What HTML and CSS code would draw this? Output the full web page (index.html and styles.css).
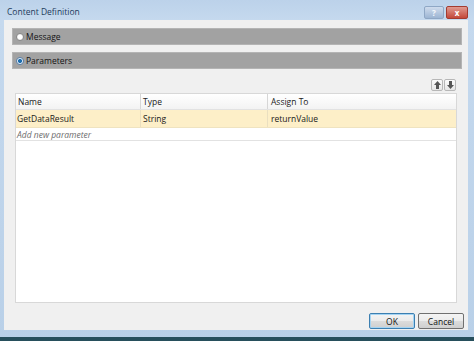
FILE: index.html
```html
<!DOCTYPE html>
<html>
<head>
<meta charset="utf-8">
<link rel="stylesheet" href="styles.css">
</head>
<body>
<div class="window">
  <div class="titlebar">
    <span class="title">Content Definition</span>
    <div class="caption-btns">
      <span class="cbtn help">?</span>
      <span class="cbtn close">x</span>
    </div>
  </div>
  <div class="client">
    <div class="bar"><span class="radio"></span><span>Message</span></div>
    <div class="bar"><span class="radio checked"></span><span>Parameters</span></div>
    <div class="movers">
      <span class="mover"><svg width="7" height="8" viewBox="0 0 7 8"><path d="M3.5 0 L7 4 L5 4 L5 8 L2 8 L2 4 L0 4 Z" fill="#555"/></svg></span>
      <span class="mover"><svg width="7" height="8" viewBox="0 0 7 8"><path d="M3.5 8 L7 4 L5 4 L5 0 L2 0 L2 4 L0 4 Z" fill="#555"/></svg></span>
    </div>
    <div class="grid">
      <div class="row head">
        <div class="cell c1">Name</div>
        <div class="cell c2">Type</div>
        <div class="cell c3">Assign To</div>
      </div>
      <div class="row data">
        <div class="cell c1">GetDataResult</div>
        <div class="cell c2">String</div>
        <div class="cell c3">returnValue</div>
      </div>
      <div class="row addnew">
        <div class="cell">Add new parameter</div>
      </div>
    </div>
    <div class="actions">
      <span class="btn default">OK</span>
      <span class="btn">Cancel</span>
    </div>
  </div>
  <div class="taskbar"></div>
</div>
</body>
</html>
```
FILE: styles.css
```css
html, body {
  margin: 0;
  padding: 0;
}
body {
  width: 474px;
  height: 341px;
  overflow: hidden;
  font-family: "Open Sans", "Noto Sans", "Liberation Sans", sans-serif;
  font-size: 8.5px;
  color: #1a1a1a;
}
.window {
  width: 474px;
  height: 341px;
  display: flex;
  flex-direction: column;
  background: linear-gradient(to bottom, #bcd2ea 0px, #c5d9ee 20px, #b9d0e8 100%);
}
.titlebar {
  height: 20px;
  display: flex;
  align-items: center;
  justify-content: space-between;
  padding: 0 6px 0 7px;
  flex: none;
}
.title {
  color: #1e3b5c;
  font-size: 8.5px;
  padding-top: 2px;
}
.caption-btns {
  display: flex;
  gap: 2px;
  align-self: flex-start;
  margin-top: 6px;
}
.cbtn {
  height: 11px;
  display: flex;
  align-items: center;
  justify-content: center;
  color: #fff;
  font-size: 8px;
  font-weight: bold;
  border-radius: 2px;
  line-height: 1;
}
.help {
  width: 18px;
  background: linear-gradient(to bottom, #cfdced, #9db5d3);
  border: 1px solid #8fa7c5;
  color: #f5f8fc;
}
.close {
  width: 20px;
  background: linear-gradient(to bottom, #e09a90, #c4483a);
  border: 1px solid #a33b30;
}
.client {
  flex: none;
  height: 310px;
  margin: 0 6px 0 4px;
  background: #f0f0f0;
  display: flex;
  flex-direction: column;
  padding-top: 8px;
  box-sizing: border-box;
}
.bar {
  height: 17px;
  margin: 0 6px 7px 8px;
  background: #a2a2a2;
  border: 1px solid #b4b4b4;
  box-sizing: border-box;
  display: flex;
  align-items: center;
  gap: 2px;
  padding-left: 3px;
  color: #141414;
}
.radio {
  width: 6px;
  height: 6px;
  border-radius: 50%;
  background: radial-gradient(circle, #ffffff 40%, #e4e4e4 100%);
  border: 1px solid #8a8a8a;
}
.radio.checked {
  background: radial-gradient(circle, #1e6fb0 0 1.8px, #e8f0f8 2.3px);
  border-color: #5a7fa6;
}
.movers {
  display: flex;
  justify-content: flex-end;
  gap: 1px;
  margin: 3px 12px 2px 0;
}
.mover {
  width: 10px;
  height: 10px;
  border: 1px solid #b7b7b7;
  border-radius: 2px;
  background: linear-gradient(to bottom, #fbfbfb, #e6e6e6);
  display: flex;
  align-items: center;
  justify-content: center;
}
.grid {
  height: 210px;
  margin: 0 11px;
  background: #fff;
  border: 1px solid #d8d8d8;
  box-sizing: border-box;
  display: flex;
  flex-direction: column;
}
.row {
  display: flex;
  flex: none;
}
.cell {
  padding-left: 1px;
  box-sizing: border-box;
  display: flex;
  align-items: center;
  white-space: nowrap;
}
.c1 { width: 125px; padding-left: 2px; }
.c2 { width: 127px; padding-left: 2px; }
.c3 { flex: 1; padding-left: 3px; }
.head {
  height: 15px;
  background: linear-gradient(to bottom, #ffffff, #f3f3f3);
  border-bottom: 1px solid #e2e2e2;
}
.head .cell {
  border-right: 1px solid #d6d6d6;
}
.head .c3 { border-right: none; }
.data {
  height: 17px;
  background: #fdefc8;
  border-bottom: 1px solid #efe3c0;
}
.data .c1 { padding-left: 1px; }
.data .cell {
  border-right: 1px solid #eadfc0;
}
.data .c3 { border-right: none; }
.addnew {
  height: 12px;
  border-bottom: 1px solid #e2e2e2;
}
.addnew .cell {
  font-style: italic;
  color: #6c6c6c;
}
.actions {
  margin-top: auto;
  margin-bottom: 1px;
  display: flex;
  justify-content: flex-end;
  gap: 3px;
  padding-right: 4px;
}
.btn {
  width: 44px;
  height: 14px;
  border: 1px solid #707070;
  border-radius: 2px;
  background: linear-gradient(to bottom, #f4f4f4 0%, #ebebeb 50%, #dcdcdc 51%, #cfcfcf 100%);
  display: flex;
  align-items: center;
  justify-content: center;
  color: #111;
}
.btn.default {
  border-color: #3c7fb1;
  box-shadow: inset 0 0 0 1px #a5d4f3;
}
.taskbar {
  margin-top: auto;
  height: 4px;
  background: #274f5c;
  flex: none;
}
```
